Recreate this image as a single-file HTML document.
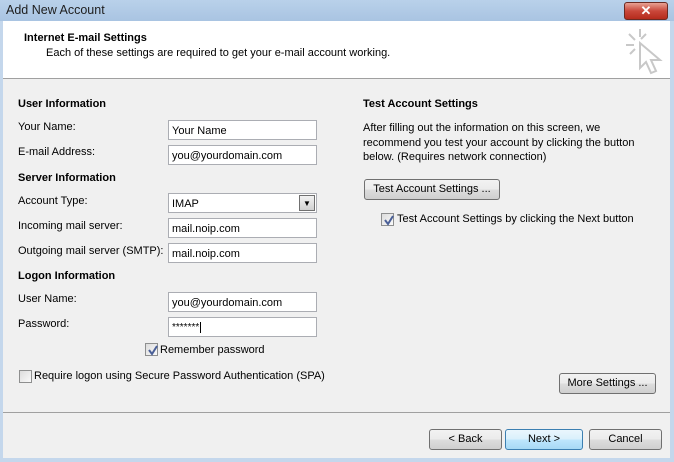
<!DOCTYPE html><html><head><style>
*{margin:0;padding:0;box-sizing:border-box}
body{width:674px;height:462px;overflow:hidden;background:#c4d7ec;font-family:"Liberation Sans",sans-serif;font-size:11px;color:#000;position:relative}
.a{position:absolute;white-space:nowrap}
.b{font-weight:bold}
.in{position:absolute;left:168px;width:149px;height:20px;background:#fff;border:1px solid #abadb3;padding:4px 0 0 3px}
.btn{position:absolute;height:21px;border:1px solid #707070;border-radius:3px;background:linear-gradient(#f2f2f2,#ebebeb 50%,#dddddd 51%,#cfcfcf);text-align:center;line-height:19px}
.cb{position:absolute;width:13px;height:13px;border:1px solid #8e8f8f;background:linear-gradient(135deg,#dcdcdc,#fafafa)}
.cb svg{position:absolute;left:1px;top:1px}
</style></head><body>
<div class="a" style="left:0;top:0;width:674px;height:21px;background:linear-gradient(#b9d1ea,#a9c4e2)"></div>
<div class="a" style="left:6px;top:3px;font-size:12.5px;color:#1e1e1e">Add New Account</div>
<div class="a" style="left:624px;top:2px;width:44px;height:18px;border:1px solid #6b2a22;border-radius:3px;background:linear-gradient(#e8a193,#c9473a 50%,#b52b1c);color:#fff;font-weight:bold;text-align:center;line-height:15px;font-size:13px">✕</div>
<div class="a" style="left:3px;top:21px;width:667px;height:437px;background:#f0f0f0"></div>
<div class="a" style="left:3px;top:21px;width:667px;height:58px;background:#fff;border-bottom:1px solid #a0a0a0"></div>
<div class="a b" style="left:24px;top:32px">Internet E-mail Settings</div>
<div class="a" style="left:46px;top:47px">Each of these settings are required to get your e-mail account working.</div>
<svg class="a" style="left:624px;top:26px" width="40" height="50" viewBox="0 0 40 50" fill="none" stroke="#c8c8c8" stroke-width="2"><path d="M16 3v8M5 8l6 6M2 19h8M22 8l-5 5M6 28l5-5"/><path d="M16 17v25l6-6 5 11 5-2-5-11h9z" fill="#fff"/></svg>
<div class="a b" style="left:18px;top:98px">User Information</div>
<div class="a" style="left:18px;top:121px">Your Name:</div>
<div class="a" style="left:18px;top:146px">E-mail Address:</div>
<div class="a b" style="left:18px;top:172px">Server Information</div>
<div class="a" style="left:18px;top:195px">Account Type:</div>
<div class="a" style="left:18px;top:220px">Incoming mail server:</div>
<div class="a" style="left:18px;top:245px">Outgoing mail server (SMTP):</div>
<div class="a b" style="left:18px;top:270px">Logon Information</div>
<div class="a" style="left:18px;top:293px">User Name:</div>
<div class="a" style="left:18px;top:318px">Password:</div>
<div class="in" style="top:120px">Your Name</div>
<div class="in" style="top:145px">you@yourdomain.com</div>
<div class="in" style="top:193px">IMAP<div style="position:absolute;right:1px;top:1px;width:16px;height:16px;border:1px solid #707070;background:linear-gradient(#f2f2f2,#d0d0d0);font-size:8px;text-align:center;line-height:15px">▼</div></div>
<div class="in" style="top:218px">mail.noip.com</div>
<div class="in" style="top:243px">mail.noip.com</div>
<div class="in" style="top:292px">you@yourdomain.com</div>
<div class="in" style="top:317px;font-size:10px;padding-top:4px">*******<span style="border-left:1px solid #000;margin-left:1px"></span></div>
<div class="cb" style="left:145px;top:343px"><svg width="11" height="11"><path d="M2 5l3 4 5-8" stroke="#4a5f97" stroke-width="2" fill="none"/></svg></div>
<div class="a" style="left:160px;top:344px">Remember password</div>
<div class="cb" style="left:19px;top:370px"></div>
<div class="a" style="left:34px;top:370px">Require logon using Secure Password Authentication (SPA)</div>
<div class="a b" style="left:363px;top:98px">Test Account Settings</div>
<div class="a" style="left:363px;top:121px;line-height:14.5px">After filling out the information on this screen, we<br>recommend you test your account by clicking the button<br>below. (Requires network connection)</div>
<div class="btn" style="left:364px;top:179px;width:136px">Test Account Settings ...</div>
<div class="cb" style="left:381px;top:213px"><svg width="11" height="11"><path d="M2 5l3 4 5-8" stroke="#4a5f97" stroke-width="2" fill="none"/></svg></div>
<div class="a" style="left:397px;top:213px">Test Account Settings by clicking the Next button</div>
<div class="btn" style="left:559px;top:373px;width:97px">More Settings ...</div>
<div class="a" style="left:3px;top:412px;width:667px;height:1px;background:#a0a0a0"></div>
<div class="btn" style="left:429px;top:429px;width:73px">&lt; Back</div>
<div class="btn" style="left:505px;top:429px;width:78px;border-color:#3c7fb1;background:linear-gradient(#eaf6fd,#d9f0fc 50%,#bee6fd 51%,#a7d9f5)">Next &gt;</div>
<div class="btn" style="left:589px;top:429px;width:73px">Cancel</div>
</body></html>
